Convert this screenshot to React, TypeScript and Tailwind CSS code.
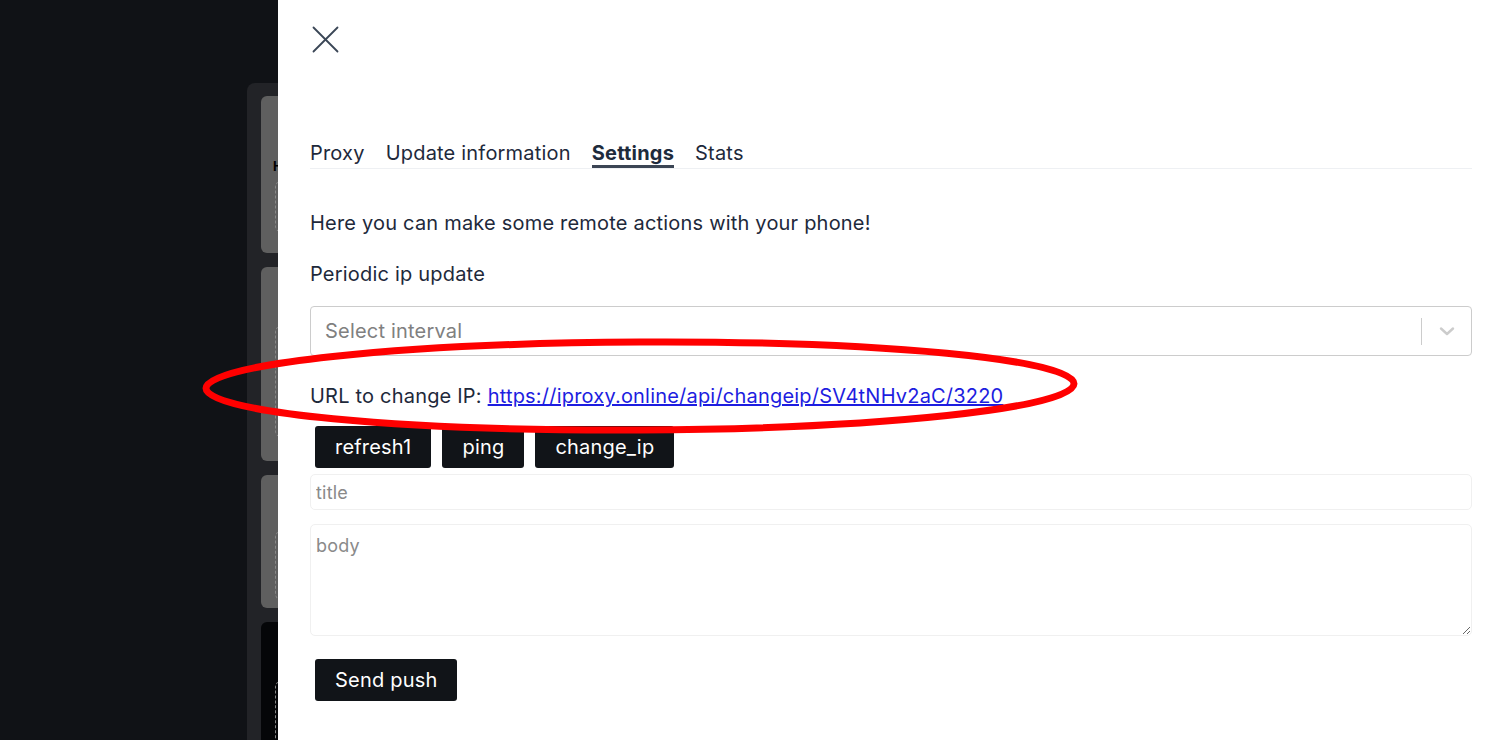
import React from "react";

const font = { fontFamily: "Inter, 'Noto Sans', Arial, sans-serif" };

function Card({ h, dark, dashTop, dashH, letter }: { h: number; dark?: boolean; dashTop: number; dashH: number; letter?: boolean }) {
  return (
    <div
      className={`relative w-[80px] shrink-0 rounded-[6px] ${dark ? "bg-[#050608]" : "bg-[#5f5f5f]"}`}
      style={{ height: h }}
    >
      {letter && (
        <div className="absolute left-[12px] top-[64px] text-[13px] font-bold leading-none text-black">H</div>
      )}
      <div
        className="absolute left-[14px] w-[60px] rounded-[6px] border border-dashed border-[#8a8a8a]"
        style={{ top: dashTop, height: dashH }}
      />
    </div>
  );
}

export default function App() {
  return (
    <div className="relative h-[740px] w-[1496px] overflow-hidden bg-[#101216]" style={font}>
      {/* background page */}
      <div className="flex h-full pl-[247px] pt-[83px]">
        <div className="flex h-[700px] w-[120px] flex-col gap-[14px] rounded-[8px] bg-[#222327] pl-[14px] pt-[13px]">
          <Card h={157} dashTop={85} dashH={51} letter />
          <Card h={194} dashTop={59} dashH={111} />
          <Card h={133} dashTop={56} dashH={69} />
          <Card h={140} dark dashTop={59} dashH={100} />
        </div>
      </div>

      {/* drawer */}
      <div className="absolute bottom-0 left-[278px] right-0 top-0 flex flex-col bg-white pl-[32px] pr-[24px] pt-[25px] tracking-[0.2px] text-[#1e293b]">
        <button className="h-[30px] w-[30px]">
          <svg width="30" height="30" viewBox="0 0 30 30" fill="none" stroke="#3a4656" strokeWidth="1.8" strokeLinecap="round">
            <line x1="3.5" y1="2.5" x2="27.5" y2="26.5" />
            <line x1="27.5" y1="2.5" x2="3.5" y2="26.5" />
          </svg>
        </button>

        <div className="mt-[86px] flex gap-[21px] border-b border-[#eef0f3] text-[20px] leading-[24px]">
          <div className="border-b-[3px] border-transparent">Proxy</div>
          <div className="border-b-[3px] border-transparent">Update information</div>
          <div className="border-b-[3px] border-[#3b4554] font-bold text-[#1e2b3c]">Settings</div>
          <div className="border-b-[3px] border-transparent">Stats</div>
        </div>

        <div className="mt-[40px] text-[20px] leading-[28px]">Here you can make some remote actions with your phone!</div>
        <div className="mt-[23px] text-[20px] leading-[28px]">Periodic ip update</div>

        <div className="mt-[18px] flex h-[50px] shrink-0 items-center rounded-[4px] border border-[#cccccc] pl-[14px]">
          <span className="flex-1 text-[20px] text-[#808080]">Select interval</span>
          <div className="h-[27px] w-px bg-[#cccccc]" />
          <div className="flex w-[49px] justify-center">
            <svg width="18" height="12" viewBox="0 0 18 12" fill="none" stroke="#cccccc" strokeWidth="2.4" strokeLinecap="round" strokeLinejoin="round">
              <path d="M3 3.5 L9 9 L15 3.5" />
            </svg>
          </div>
        </div>

        <div className="mt-[26px] text-[20px] leading-[28px]">
          URL to change IP:{" "}
          <a href="#" className="text-[#1d1de0] underline">https://iproxy.online/api/changeip/SV4tNHv2aC/3220</a>
        </div>

        <div className="ml-[5px] mt-[16px] flex gap-[11px]">
          {["refresh1", "ping", "change_ip"].map((t) => (
            <button key={t} className="h-[42px] rounded-[3px] bg-[#111418] px-[20px] text-[20px] leading-[24px] tracking-[0.2px] text-white">
              {t}
            </button>
          ))}
        </div>

        <input
          placeholder="title"
          className="mt-[6px] box-border h-[36px] w-full shrink-0 rounded-[5px] border border-[#f0f0f0] px-[5px] text-[18px] leading-[24px] outline-none placeholder:text-[#8a8a8a]"
        />
        <textarea
          placeholder="body"
          className="mt-[14px] box-border block h-[112px] w-full shrink-0 rounded-[5px] border border-[#f0f0f0] px-[5px] pt-[9px] text-[18px] leading-[24px] outline-none placeholder:text-[#8a8a8a]"
        />

        <div className="ml-[5px] mt-[23px] flex">
          <button className="h-[42px] rounded-[3px] bg-[#111418] px-[20px] text-[20px] leading-[24px] tracking-[0.2px] text-white">Send push</button>
        </div>
      </div>

      {/* red annotation */}
      <svg className="pointer-events-none absolute left-0 top-0" width="1496" height="740">
        <ellipse cx="640" cy="386" rx="434" ry="44" fill="none" stroke="#ff0000" strokeWidth="7" transform="rotate(-0.3 640 386)" />
      </svg>
    </div>
  );
}
